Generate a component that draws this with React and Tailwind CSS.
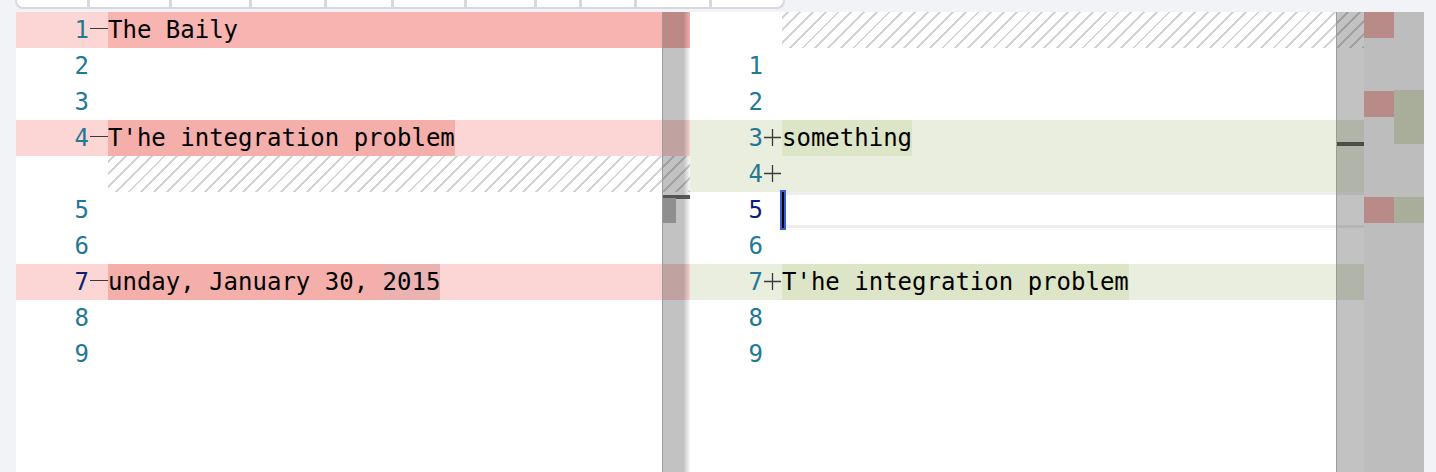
import React from "react";

const mono = "font-['DejaVu_Sans_Mono','Liberation_Mono',monospace]";
const hatch =
  "bg-[repeating-linear-gradient(-45deg,#d4d4d4_0_2px,transparent_2px_9px)]";

const tabCells = [73, 82, 80, 75, 67, 73, 70, 45, 55, 75, 75];

const leftRows = [
  { num: "1", kind: "del", text: "The Baily", full: true },
  { num: "2" },
  { num: "3" },
  { num: "4", kind: "del", text: "T'he integration problem" },
  { kind: "hatch" },
  { num: "5" },
  { num: "6" },
  { num: "7", kind: "del", text: "unday, January 30, ", tail: "2015", active: true },
  { num: "8" },
  { num: "9" },
];

const rightRows = [
  { kind: "hatch" },
  { num: "1" },
  { num: "2" },
  { num: "3", kind: "add", text: "something" },
  { num: "4", kind: "add", text: "" },
  { num: "5", kind: "cursor", active: true },
  { num: "6" },
  { num: "7", kind: "add", text: "T'he integration problem" },
  { num: "8" },
  { num: "9" },
];

function Minus() {
  return <div className="h-[1.5px] w-[18px] bg-[#3a3a3a] -mt-[3px]" />;
}

function Plus() {
  return (
    <svg width="19" height="19" viewBox="0 0 19 19" className="-mt-[1px]">
      <path d="M1 9.5h17M9.5 1v17" stroke="#3a3a3a" strokeWidth="1.3" fill="none" />
    </svg>
  );
}

function Row({ row, side }) {
  if (row.kind === "hatch") {
    return (
      <div className="flex h-[36px]">
        <div className="w-[92px] shrink-0" />
        <div className={`flex-1 ${hatch}`} />
      </div>
    );
  }
  const del = row.kind === "del";
  const add = row.kind === "add";
  const lineBg = del ? "bg-[#fcd6d4]" : add ? "bg-[#e9eedf]" : "bg-white";
  const numColor = row.active ? "text-[#0b216f]" : "text-[#237893]";
  return (
    <div className={`flex h-[36px] ${lineBg}`}>
      <div className="flex w-[92px] shrink-0 items-center">
        <div className={`w-[73px] text-right ${numColor}`}>{row.num}</div>
        <div className="flex w-[19px] items-center justify-center">
          {del && <Minus />}
          {add && <Plus />}
        </div>
      </div>
      <div
        className={`relative flex flex-1 whitespace-pre text-black ${
          row.kind === "cursor" ? "border-y-[3px] border-[#eeeeee]" : ""
        }`}
      >
        {del && (
          <span className={row.full ? "flex-1 bg-[#f7b4b0]" : "bg-[#f4afab]"}>{row.text}</span>
        )}
        {del && row.tail && <span className="bg-[#eab3b2]">{row.tail}</span>}
        {add && row.text && <span className="bg-[#dde5c9]">{row.text}</span>}
        {row.kind === "cursor" && (
          <div className="absolute left-[-2px] top-[-5px] h-[40px] w-[6px] border-2 border-[#3b5bdb] bg-black" />
        )}
      </div>
    </div>
  );
}

function Pane({ rows, side }) {
  return (
    <div className={`relative w-[674px] shrink-0 bg-white ${mono} text-[24px] leading-[36px]`}>
      {rows.map((r, i) => (
        <Row key={i} row={r} side={side} />
      ))}
      {side === "left" ? (
        <div className="absolute right-0 top-0 bottom-0 w-[28px] border-l border-[#9c9c9c] bg-[linear-gradient(to_right,rgba(0,0,0,0.24)_76%,rgba(0,0,0,0.02))]">
          <div className="absolute left-0 right-0 top-[183px] h-[4px] bg-[#555]" />
          <div className="absolute left-0 top-[186px] h-[25px] w-[13px] bg-[#8f8f8f]" />
        </div>
      ) : (
        <div className="absolute right-0 top-0 bottom-0 w-[28px] border-l border-[#9c9c9c] bg-black/[0.24]">
          <div className="absolute left-0 right-0 top-[130px] h-[4px] bg-[#4b4d4b]" />
        </div>
      )}
    </div>
  );
}

export default function App() {
  return (
    <div className="h-[472px] w-[1436px] overflow-hidden bg-[#f2f3f6]">
      <div className="ml-[15px] flex h-[9px] w-[770px] overflow-hidden rounded-b-[8px] border-x-2 border-b-2 border-[#d7d9df] bg-white">
        {tabCells.map((w, i) => (
          <div
            key={i}
            className={`h-full shrink-0 ${i < tabCells.length - 1 ? "border-r-[3px] border-[#d7d9df]" : ""}`}
            style={{ width: w }}
          />
        ))}
      </div>
      <div className="ml-[16px] mt-[3px] flex h-[460px] w-[1408px]">
        <Pane rows={leftRows} side="left" />
        <Pane rows={rightRows} side="right" />
        <div className="relative w-[60px] shrink-0 bg-[#bdbdbd]">
          <div className="absolute left-0 top-0 h-[26px] w-[30px] bg-[#b98b88]" />
          <div className="absolute left-0 top-[79px] h-[26px] w-[30px] bg-[#b98b88]" />
          <div className="absolute left-0 top-[185px] h-[26px] w-[30px] bg-[#b98b88]" />
          <div className="absolute left-[30px] top-[78px] h-[54px] w-[30px] bg-[#a8ae9a]" />
          <div className="absolute left-[30px] top-[185px] h-[26px] w-[30px] bg-[#a8ae9a]" />
        </div>
      </div>
    </div>
  );
}
